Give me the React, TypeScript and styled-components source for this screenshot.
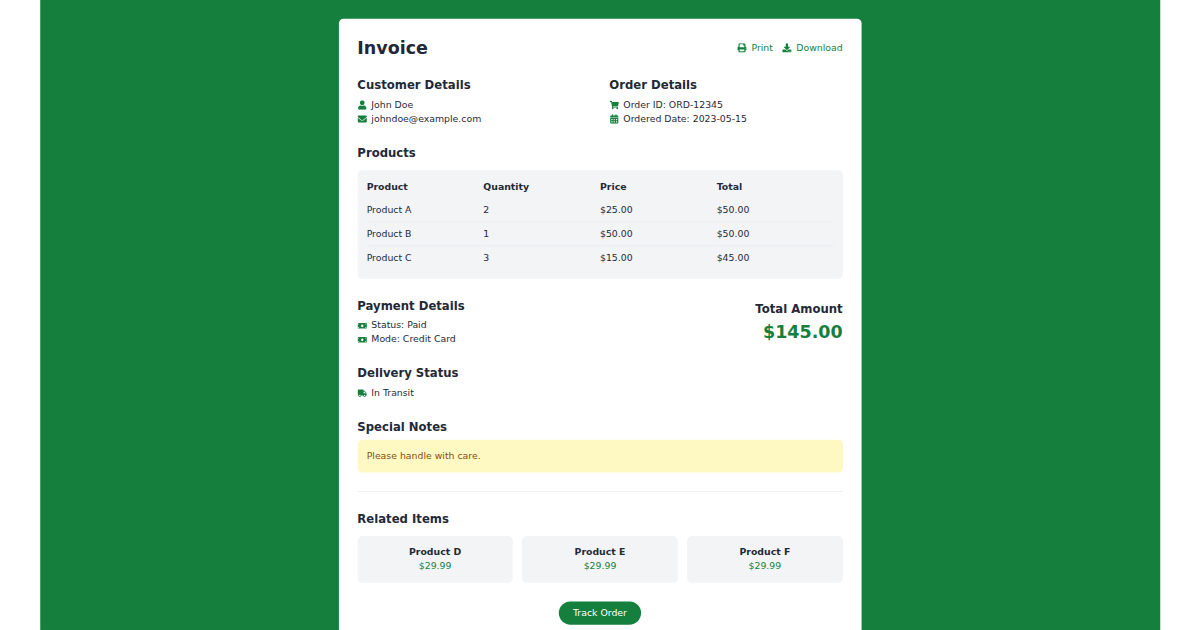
import { createGlobalStyle, styled } from "styled-components";
import React from "react";
import {
  FaCalendarAlt,
  FaDownload,
  FaEnvelope,
  FaMoneyBill,
  FaPrint,
  FaShoppingCart,
  FaTruck,
  FaUser,
} from "react-icons/fa";

const GlobalStyle = createGlobalStyle`
  html, body {
    margin: 0;
    padding: 0;
    height: 630px;
    overflow: hidden;
    background: #fff;
    font-family: "DejaVu Sans", sans-serif;
  }
`;

const Frame = styled.div`
  width: 1200px;
  height: 630px;
  overflow: hidden;
`;

// the page is laid out at 2057x1080 and shrunk to fit the 1200px window
const Viewport = styled.div`
  width: 2057.14px;
  height: 1080px;
  transform: scale(0.58333);
  transform-origin: 0 0;
`;

const Page = styled.div`
  width: 1920px;
  height: 1080px;
  margin: 0 auto;
  padding-top: 32px;
  box-sizing: border-box;
  overflow: hidden;
  background: #15803d;
`;

// the card runs on below the window, so it stops at the page edge with square bottom corners
const Card = styled.main`
  width: 896px;
  height: 1048px;
  box-sizing: border-box;
  margin: 0 auto;
  padding: 32px 32px 0;
  overflow: hidden;
  background: #fff;
  border-radius: 8px 8px 0 0;
  color: #1f2937;
  font-size: 16px;
  line-height: 24px;
`;

const Header = styled.header`
  display: flex;
  justify-content: space-between;
  align-items: center;
  margin-bottom: 32px;
`;

const Title = styled.h1`
  margin: 0;
  font-size: 30px;
  line-height: 36px;
  font-weight: 700;
`;

const Actions = styled.div`
  display: flex;
  gap: 16px;
`;

const ActionLink = styled.a`
  display: flex;
  align-items: center;
  gap: 8px;
  color: #15803d;
`;

const TwoColumns = styled.section`
  display: grid;
  grid-template-columns: 1fr 1fr;
  gap: 32px;
  margin-bottom: 32px;
`;

const Heading = styled.h2<{ $gap?: number }>`
  margin: 0 0 ${(props) => props.$gap ?? 8}px;
  font-size: 20px;
  line-height: 28px;
  font-weight: 700;
`;

const InfoLine = styled.p`
  display: flex;
  align-items: center;
  gap: 8px;
  margin: 0;
`;

const Section = styled.section`
  margin-bottom: 32px;
`;

const TableBox = styled.div`
  padding: 16px;
  background: #f3f4f6;
  border-radius: 8px;
`;

const Table = styled.table`
  width: 100%;
  border-collapse: collapse;
  table-layout: fixed;
`;

const HeadCell = styled.th`
  padding: 0 0 8px;
  text-align: left;
  font-weight: 700;
`;

const Row = styled.tr`
  border-bottom: 1px solid #e5e7eb;

  &:last-child {
    border-bottom: none;
  }
`;

const Cell = styled.td`
  padding: 8px 0;
`;

const PaymentRow = styled.section`
  display: flex;
  justify-content: space-between;
  align-items: center;
  margin-bottom: 32px;
`;

const TotalBox = styled.div`
  text-align: right;
`;

const TotalLabel = styled.div`
  margin-bottom: 8px;
  font-size: 20px;
  line-height: 28px;
  font-weight: 700;
`;

const TotalValue = styled.div`
  font-size: 30px;
  line-height: 36px;
  font-weight: 700;
  color: #15803d;
`;

const Note = styled.div`
  padding: 16px;
  border-radius: 8px;
  background: #fef9c3;
  color: #854d0e;
`;

const Divider = styled.hr`
  margin: 0 0 32px;
  border: none;
  border-top: 1px solid #e5e7eb;
`;

const RelatedGrid = styled.div`
  display: grid;
  grid-template-columns: repeat(3, 1fr);
  gap: 16px;
`;

const RelatedCard = styled.div`
  padding: 16px;
  border-radius: 8px;
  background: #f3f4f6;
  text-align: center;
`;

const RelatedName = styled.div`
  font-weight: 700;
`;

const RelatedPrice = styled.div`
  color: #15803d;
`;

const ButtonRow = styled.div`
  display: flex;
  justify-content: center;
`;

const TrackButton = styled.button`
  padding: 8px 24px;
  border: none;
  border-radius: 9999px;
  background: #15803d;
  color: #fff;
  font-family: inherit;
  font-size: 16px;
  line-height: 24px;
`;

const Icon = styled.span`
  display: inline-flex;
  flex: none;
  width: 16px;
  justify-content: center;
  color: #15803d;
  font-size: 16px;
`;

const products = [
  { name: "Product A", quantity: 2, price: "$25.00", total: "$50.00" },
  { name: "Product B", quantity: 1, price: "$50.00", total: "$50.00" },
  { name: "Product C", quantity: 3, price: "$15.00", total: "$45.00" },
];

const related = ["Product D", "Product E", "Product F"];

const App = () => {
  return (
    <Frame>
      <GlobalStyle />
      <Viewport>
        <Page>
          <Card>
            <Header>
              <Title>Invoice</Title>
              <Actions>
                <ActionLink><FaPrint />Print</ActionLink>
                <ActionLink><FaDownload />Download</ActionLink>
              </Actions>
            </Header>

            <TwoColumns>
              <div>
                <Heading>Customer Details</Heading>
                <InfoLine><Icon><FaUser /></Icon>John Doe</InfoLine>
                <InfoLine><Icon><FaEnvelope /></Icon>johndoe@example.com</InfoLine>
              </div>
              <div>
                <Heading>Order Details</Heading>
                <InfoLine><Icon><FaShoppingCart /></Icon>Order ID: ORD-12345</InfoLine>
                <InfoLine><Icon><FaCalendarAlt /></Icon>Ordered Date: 2023-05-15</InfoLine>
              </div>
            </TwoColumns>

            <Section>
              <Heading $gap={16}>Products</Heading>
              <TableBox>
                <Table>
                  <thead>
                    <tr>
                      <HeadCell>Product</HeadCell>
                      <HeadCell>Quantity</HeadCell>
                      <HeadCell>Price</HeadCell>
                      <HeadCell>Total</HeadCell>
                    </tr>
                  </thead>
                  <tbody>
                    {products.map((p) => (
                      <Row key={p.name}>
                        <Cell>{p.name}</Cell>
                        <Cell>{p.quantity}</Cell>
                        <Cell>{p.price}</Cell>
                        <Cell>{p.total}</Cell>
                      </Row>
                    ))}
                  </tbody>
                </Table>
              </TableBox>
            </Section>

            <PaymentRow>
              <div>
                <Heading>Payment Details</Heading>
                <InfoLine><Icon><FaMoneyBill size={17} /></Icon>Status: Paid</InfoLine>
                <InfoLine><Icon><FaMoneyBill size={17} /></Icon>Mode: Credit Card</InfoLine>
              </div>
              <TotalBox>
                <TotalLabel>Total Amount</TotalLabel>
                <TotalValue>$145.00</TotalValue>
              </TotalBox>
            </PaymentRow>

            <Section>
              <Heading>Delivery Status</Heading>
              <InfoLine><Icon><FaTruck /></Icon>In Transit</InfoLine>
            </Section>

            <Section>
              <Heading>Special Notes</Heading>
              <Note>Please handle with care.</Note>
            </Section>

            <Divider />

            <Section>
              <Heading $gap={16}>Related Items</Heading>
              <RelatedGrid>
                {related.map((name) => (
                  <RelatedCard key={name}>
                    <RelatedName>{name}</RelatedName>
                    <RelatedPrice>$29.99</RelatedPrice>
                  </RelatedCard>
                ))}
              </RelatedGrid>
            </Section>

            <ButtonRow>
              <TrackButton>Track Order</TrackButton>
            </ButtonRow>
          </Card>
        </Page>
      </Viewport>
    </Frame>
  );
};

export default App;
